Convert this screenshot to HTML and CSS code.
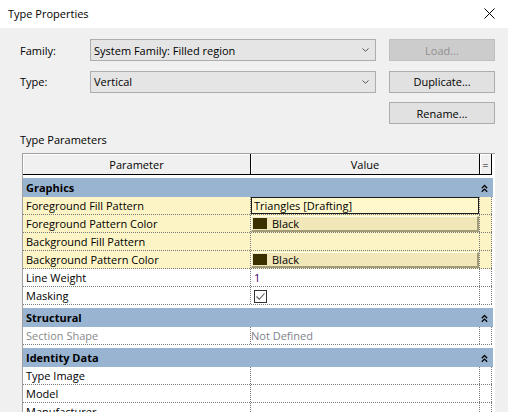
FILE: index.html
```html
<!DOCTYPE html>
<html>
<head>
<meta charset="utf-8">
<link rel="stylesheet" href="styles.css">
</head>
<body>
<div class="titlebar">
  <span class="title">Type Properties</span>
  <svg class="close" width="11" height="11" viewBox="0 0 11 11"><path d="M0.5 0.5 L10.5 10.5 M10.5 0.5 L0.5 10.5" stroke="#000" stroke-width="1" fill="none"/></svg>
</div>
<div class="form">
  <div class="lbl r1">Family:</div>
  <div class="select r1"><span>System Family: Filled region</span><svg class="chev" width="7" height="4" viewBox="0 0 7 4"><path d="M0.5 0.5 L3.5 3.3 L6.5 0.5" stroke="#555" fill="none"/></svg></div>
  <div class="btn disabled r1">Load...</div>
  <div class="lbl r2">Type:</div>
  <div class="select r2"><span>Vertical</span><svg class="chev" width="7" height="4" viewBox="0 0 7 4"><path d="M0.5 0.5 L3.5 3.3 L6.5 0.5" stroke="#555" fill="none"/></svg></div>
  <div class="btn r2">Duplicate...</div>
  <div class="btn r3">Rename...</div>
</div>
<div class="section-label">Type Parameters</div>
<div class="grid">
  <div class="hdr"><div class="hc">Parameter</div><div class="hc">Value</div><div class="hc">=</div></div>

  <div class="group"><div class="band"><div class="bt">Graphics</div><div></div><div class="bi"><svg width="7" height="9" viewBox="0 0 7 9"><path d="M0.8 4.2 L3.5 1.5 L6.2 4.2 M0.8 7.8 L3.5 5.1 L6.2 7.8" stroke="#000" stroke-width="1.3" fill="none"/></svg></div></div></div>
  <div class="prow hl"><div class="p">Foreground Fill Pattern</div><div class="v"><div class="vbox">Triangles [Drafting]</div></div><div class="e"></div></div>
  <div class="prow hl"><div class="p">Foreground Pattern Color</div><div class="v"><div class="cbtn"><span class="sw"></span><span>Black</span></div></div><div class="e"></div></div>
  <div class="prow hl"><div class="p">Background Fill Pattern</div><div class="v"></div><div class="e"></div></div>
  <div class="prow hl"><div class="p">Background Pattern Color</div><div class="v"><div class="cbtn"><span class="sw"></span><span>Black</span></div></div><div class="e"></div></div>
  <div class="prow"><div class="p">Line Weight</div><div class="v"><span class="num">1</span></div><div class="e"></div></div>
  <div class="prow"><div class="p">Masking</div><div class="v"><span class="chk"><svg width="11" height="11" viewBox="0 0 11 11"><path d="M1.5 5.5 L4.3 8.3 L9.5 2.5" stroke="#555" stroke-width="1.1" fill="none"/></svg></span></div><div class="e"></div></div>

  <div class="group"><div class="band"><div class="bt">Structural</div><div></div><div class="bi"><svg width="7" height="9" viewBox="0 0 7 9"><path d="M0.8 4.2 L3.5 1.5 L6.2 4.2 M0.8 7.8 L3.5 5.1 L6.2 7.8" stroke="#000" stroke-width="1.3" fill="none"/></svg></div></div></div>
  <div class="prow"><div class="p dim">Section Shape</div><div class="v dimv">Not Defined</div><div class="e"></div></div>

  <div class="group"><div class="band"><div class="bt">Identity Data</div><div></div><div class="bi"><svg width="7" height="9" viewBox="0 0 7 9"><path d="M0.8 4.2 L3.5 1.5 L6.2 4.2 M0.8 7.8 L3.5 5.1 L6.2 7.8" stroke="#000" stroke-width="1.3" fill="none"/></svg></div></div></div>
  <div class="prow"><div class="p">Type Image</div><div class="v"></div><div class="e"></div></div>
  <div class="prow"><div class="p">Model</div><div class="v"></div><div class="e"></div></div>
  <div class="prow"><div class="p">Manufacturer</div><div class="v"></div><div class="e"></div></div>
</div>
</body>
</html>
```
FILE: styles.css
```css
html, body {
  margin: 0;
  padding: 0;
}
body {
  width: 508px;
  height: 412px;
  overflow: hidden;
  background: #f0f0f0;
  font-family: "Open Sans", "Noto Sans", sans-serif;
  font-size: 11px;
  color: #000;
}
.titlebar {
  height: 28px;
  background: #fff;
  display: flex;
  align-items: center;
  padding-left: 8px;
}
.title {
  font-size: 11px;
  margin-top: -2px;
}
.close {
  margin-left: auto;
  margin-right: 13px;
  margin-top: -2px;
}
.form {
  display: grid;
  grid-template-columns: 70px 286px 13px 106px;
  grid-template-rows: 22px 22px 22px;
  row-gap: 9.5px;
  padding: 11px 0 0 20px;
}
.lbl {
  display: flex;
  align-items: center;
  grid-column: 1;
}
.r1 { grid-row: 1; }
.r2 { grid-row: 2; }
.r3 { grid-row: 3; }
.select {
  grid-column: 2;
  box-sizing: border-box;
  border: 1px solid #adadad;
  background: #e5e5e5;
  display: flex;
  align-items: center;
  padding-left: 3px;
}
.chev {
  margin-left: auto;
  margin-right: 6px;
}
.btn {
  grid-column: 4;
  box-sizing: border-box;
  border: 1px solid #adadad;
  background: #e1e1e1;
  display: flex;
  align-items: center;
  justify-content: center;
}
.btn.disabled {
  background: #cccccc;
  border-color: #bfbfbf;
  color: #8f8f8f;
}
.section-label {
  padding-left: 20px;
  margin-top: 9px;
  height: 14px;
  line-height: 14px;
  margin-bottom: 6px;
}
.grid {
  margin-left: 22px;
  width: 473px;
  height: 259px;
  box-sizing: border-box;
  border-left: 1px solid #a0a0a0;
  border-top: 1px solid #a0a0a0;
  background: #fff;
  overflow: hidden;
}
.hdr, .prow, .band {
  display: grid;
  grid-template-columns: 228px 229px 12px;
  width: 469px;
}
.hdr {
  height: 21px;
  box-sizing: border-box;
  border-bottom: 1px solid #000;
  background: #f0f0f0;
}
.hc {
  box-sizing: border-box;
  border-right: 1px solid #000;
  display: flex;
  align-items: center;
  justify-content: center;
  box-shadow: inset 1px 1px 0 #fff;
}
.group {
  height: 22px;
  box-sizing: border-box;
  padding-top: 3px;
}
.band {
  width: 470px;
  height: 19px;
  background: #99b4d1;
  font-weight: bold;
  align-items: center;
}
.bt {
  padding-left: 3px;
}
.bi {
  display: flex;
  align-items: center;
  padding-left: 1px;
  padding-top: 1px;
}
.bi svg { display: block; }
.prow {
  height: 18px;
  box-sizing: border-box;
  border-bottom: 1px dotted #7a7a7a;
}
.prow.hl {
  background: #fdf4c6;
}
.p, .v, .e {
  box-sizing: border-box;
  border-right: 1px dotted #7a7a7a;
  height: 17px;
  line-height: 17px;
  white-space: nowrap;
  overflow: hidden;
}
.p {
  padding-left: 3px;
}
.v .num {
  padding-left: 3px;
  color: #3c0066;
}
.dim {
  color: #8a8a8a;
}
.dimv {
  color: #7f7f8c;
  padding-left: 0;
}
.vbox {
  height: 17px;
  box-sizing: border-box;
  border: 1px solid #1c1c1c;
  background: #fff8cc;
  padding-left: 2px;
  line-height: 15px;
}
.cbtn {
  margin-top: 1px;
  height: 16px;
  box-sizing: border-box;
  border-top: 1px solid #fffbe8;
  border-left: 1px solid #fffbe8;
  border-right: 2px solid #a39c78;
  border-bottom: 2px solid #a39c78;
  background: #f1e7b8;
  display: flex;
  align-items: center;
  padding-left: 1px;
}
.sw {
  width: 14px;
  height: 11px;
  background: #3b3000;
  margin-right: 5px;
  margin-top: -1px;
}
.chk {
  display: inline-flex;
  align-items: center;
  justify-content: center;
  margin: 3px 0 0 3px;
  width: 13px;
  height: 13px;
  box-sizing: border-box;
  border: 1px solid #333;
  background: #fff;
  vertical-align: top;
}
.chk svg { display: block; }
```
